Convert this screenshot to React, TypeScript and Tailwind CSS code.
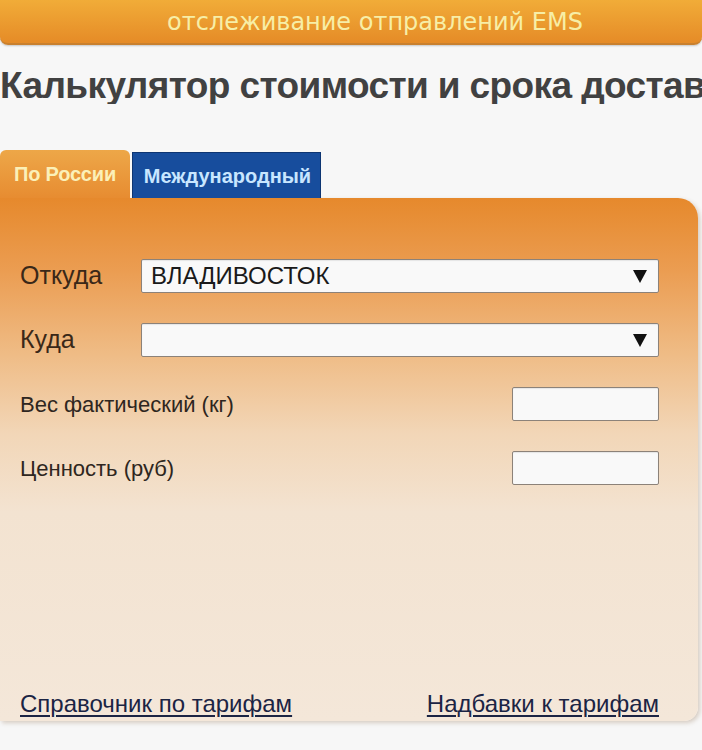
import React from "react";

function Caret() {
  return (
    <svg width="14" height="13" viewBox="0 0 14 13" className="shrink-0">
      <polygon points="0,0 14,0 7,13" fill="#111" />
    </svg>
  );
}

export default function App() {
  return (
    <div className="w-[702px] h-[750px] overflow-hidden bg-[#f7f7f7] font-['Liberation_Sans',Arial,sans-serif]">
      <div className="h-[45px] rounded-b-[8px] bg-gradient-to-b from-[#f1ac38] to-[#e58b27] border-b-2 border-[#c9802e] flex items-center justify-center pl-[48px] shadow-[0_1px_2px_rgba(0,0,0,0.2)]">
        <span className="text-[24px] text-[#f7eea6] font-['DejaVu_Sans',sans-serif] leading-none">
          отслеживание отправлений EMS
        </span>
      </div>

      <div className="mt-[23px] h-[36px] overflow-hidden whitespace-nowrap text-[37px] font-bold leading-[36px] text-[#414141] tracking-[-0.6px]">
        Калькулятор стоимости и срока доставки
      </div>

      <div className="mt-[46px] flex items-end gap-[2px]">
        <div className="h-[48px] w-[130px] rounded-t-[6px] bg-gradient-to-b from-[#eda748] to-[#e78c31] flex items-center justify-center">
          <span className="text-[20px] font-bold text-[#fbf0b8] tracking-[-0.2px]">По России</span>
        </div>
        <div className="h-[46px] w-[189px] bg-[#174d9d] border border-[#0d3572] border-b-0 flex items-center justify-center pl-[2px]">
          <span className="text-[20px] font-bold text-[#c8e6ff] tracking-[0px]">Международный</span>
        </div>
      </div>

      <div className="w-[698px] h-[523px] rounded-tr-[20px] rounded-br-[14px] bg-[linear-gradient(to_bottom,#e6892c_0%,#eb9d52_14%,#efbc86_30%,#f2d6b7_45%,#f3e3d1_60%,#f4e7d9_100%)] shadow-[2px_2px_4px_rgba(120,80,40,0.25)] pl-[20px] pr-[39px] pt-[61px] flex flex-col">
        <div className="flex items-center h-[34px]">
          <div className="w-[121px] text-[25px] text-[#3a2818]">Откуда</div>
          <div className="flex-1 h-[34px] bg-[#f9f9f9] border border-[#8c8279] rounded-[2px] flex items-center pl-[9px] pr-[11px] shadow-[inset_0_1px_1px_rgba(0,0,0,0.08)]">
            <span className="flex-1 text-[24px] text-[#1a1a1a] leading-none">ВЛАДИВОСТОК</span>
            <Caret />
          </div>
        </div>
        <div className="flex items-center h-[34px] mt-[30px]">
          <div className="w-[121px] text-[25px] text-[#3a2818]">Куда</div>
          <div className="flex-1 h-[34px] bg-[#f9f9f9] border border-[#8c8279] rounded-[2px] flex items-center pl-[9px] pr-[11px] shadow-[inset_0_1px_1px_rgba(0,0,0,0.08)]">
            <span className="flex-1" />
            <Caret />
          </div>
        </div>
        <div className="flex items-center h-[34px] mt-[30px]">
          <div className="flex-1 text-[22px] text-[#2e2620]">Вес фактический (кг)</div>
          <div className="w-[147px] h-[34px] bg-[#f9f9f9] border border-[#8c8279] rounded-[2px] shadow-[inset_0_1px_1px_rgba(0,0,0,0.08)]" />
        </div>
        <div className="flex items-center h-[34px] mt-[30px]">
          <div className="flex-1 text-[22px] text-[#2e2620]">Ценность (руб)</div>
          <div className="w-[147px] h-[34px] bg-[#f9f9f9] border border-[#8c8279] rounded-[2px] shadow-[inset_0_1px_1px_rgba(0,0,0,0.08)]" />
        </div>

        <div className="mt-auto mb-[5px] flex justify-between items-end">
          <a className="text-[24px] text-[#1b2444] underline decoration-[2px] underline-offset-[3px] leading-none">
            Справочник по тарифам
          </a>
          <a className="text-[24px] text-[#1b2444] underline decoration-[2px] underline-offset-[3px] leading-none">
            Надбавки к тарифам
          </a>
        </div>
      </div>
    </div>
  );
}
